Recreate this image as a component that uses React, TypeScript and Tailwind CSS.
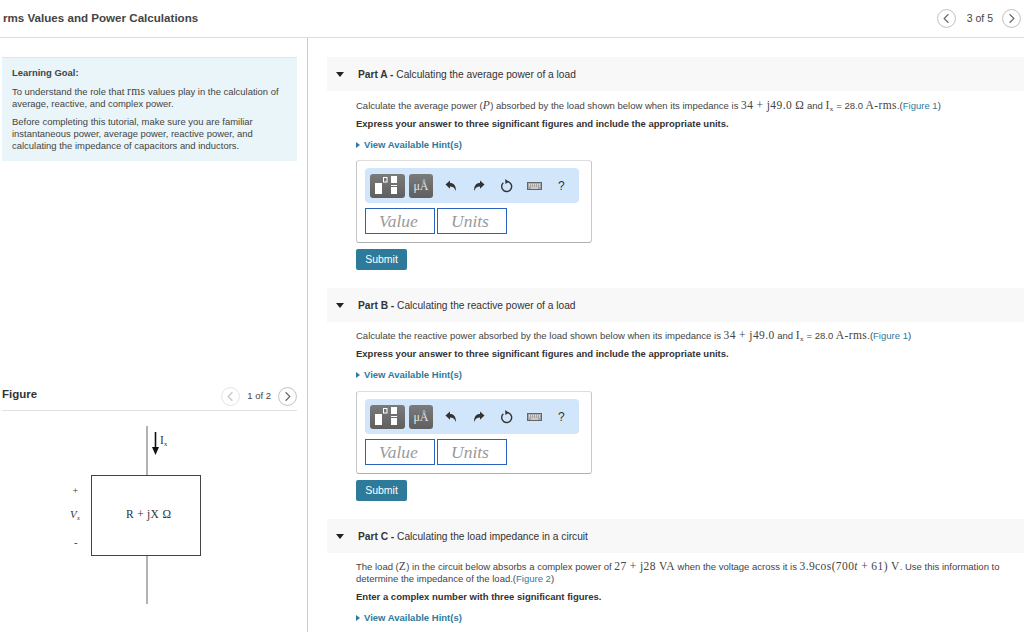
import React from "react";

const M = ({ children, className = "" }: { children: React.ReactNode; className?: string }) => (
  <span className={`font-['Liberation_Serif',serif] text-[11.5px] tracking-[0.4px] ${className}`}>{children}</span>
);
const Link = ({ children }: { children: React.ReactNode }) => <span className="text-[#2f7a9c]">{children}</span>;

const Circle = ({ dir, muted = false, size = 19 }: { dir: "l" | "r"; muted?: boolean; size?: number }) => (
  <svg width={size} height={size} viewBox="0 0 20 20" className="shrink-0">
    <circle cx="10" cy="10" r="9.4" fill="#fff" stroke={muted ? "#dedede" : "#b5b5b5"} strokeWidth="0.9" />
    <path d={dir === "l" ? "M12 5.5 7.5 10l4.5 4.5" : "M8 5.5 12.5 10 8 14.5"} fill="none" stroke={muted ? "#c4c4c4" : "#666"} strokeWidth="1.2" />
  </svg>
);

const Template = () => (
  <svg width="35" height="24" viewBox="0 0 35 24">
    <rect x="5" y="9" width="7" height="11" fill="#fff" />
    <rect x="13.500" y="3.500" width="3.500" height="4.500" fill="none" stroke="#fff" strokeWidth="1" />
    <rect x="21" y="2" width="6" height="7" fill="#fff" />
    <rect x="21" y="11" width="6" height="1" fill="#fff" />
    <rect x="21" y="13" width="6" height="7" fill="#fff" />
  </svg>
);

const Toolbar = () => (
  <div className="flex h-[35px] w-[214px] items-center rounded-[4px] bg-[#d2e6fb] pl-[5px]">
    <div className="h-[24px] w-[35px] rounded-[3px] bg-gradient-to-b from-[#7b7b7b] to-[#5f5f5f]">
      <Template />
    </div>
    <div className="ml-[4px] flex h-[24px] w-[24px] items-center justify-center rounded-[3px] bg-gradient-to-b from-[#7b7b7b] to-[#5f5f5f] font-['Liberation_Serif',serif] text-[12px] text-[#e6e6e6]">
      μÅ
    </div>
    <svg width="12" height="12" viewBox="0 0 12 12" className="ml-[12px]">
      <path d="M0.5 4.5 5 0.5V3c3.800 0 6 2.400 6 8C9.600 7.800 8 6.400 5 6.400V8.700Z" fill="#333" />
    </svg>
    <svg width="12" height="12" viewBox="0 0 12 12" className="ml-[16px]">
      <path d="M11.500 4.500 7 0.500V3C3.200 3 1 5.400 1 11 2.400 7.800 4 6.400 7 6.400V8.700Z" fill="#333" />
    </svg>
    <svg width="13" height="14" viewBox="0 0 13 14" className="ml-[15px]">
      <path d="M7.500 2.600A5 5 0 1 1 3.300 3.800" fill="none" stroke="#333" strokeWidth="1.400" />
      <path d="M5.200 0 9 2.700 5.400 5Z" fill="#333" />
    </svg>
    <svg width="15" height="8" viewBox="0 0 15 8" className="ml-[14px]">
      <rect x="0.500" y="0.500" width="14" height="7" fill="#a5a5a5" stroke="#666" />
      <path d="M2 2.300h11M2 4h11" stroke="#eeeeee" strokeDasharray="1 1" />
      <path d="M4 6h7" stroke="#eeeeee" />
    </svg>
    <span className="ml-[16px] font-['Liberation_Sans',sans-serif] text-[12px] text-[#333]">?</span>
  </div>
);

const Answer = () => (
  <div>
    <div className="flex h-[83px] w-[236px] flex-col gap-[5px] rounded-[3px] border border-t-[#dddddd] border-x-[#c8c8c8] border-b-[#b0b0b0] pl-[8px] pt-[7px]">
      <Toolbar />
      <div className="flex gap-[2px]">
        {["Value", "Units"].map((t) => (
          <div
            key={t}
            className="flex h-[26px] w-[70px] items-center border border-[#2a62bd] pl-[13px] font-['Liberation_Serif',serif] text-[17.5px] italic text-[#9a9a9a]"
          >
            {t}
          </div>
        ))}
      </div>
    </div>
    <div className="mt-[6px] flex h-[21px] w-[51px] items-center justify-center rounded-[2px] bg-[#2e7a9a] text-[10.5px] text-white">
      Submit
    </div>
  </div>
);

const Part = ({ title, sub, children }: { title: string; sub: string; children: React.ReactNode }) => (
  <section>
    <div className="flex h-[34px] items-center bg-[#f8f8f8] pl-[9px]">
      <svg width="8" height="5" viewBox="0 0 8 5" className="shrink-0">
        <path d="M0 0h8L4 5Z" fill="#222" />
      </svg>
      <span className="ml-[14px] pt-[2px] text-[10.2px] text-[#333]">
        <b>{title} - </b>
        {sub}
      </span>
    </div>
    <div className="pl-[29px]">{children}</div>
  </section>
);

const Hint = () => (
  <div className="mt-[7px] flex h-[14px] items-center text-[9.5px] font-bold text-[#2f7a9c]">
    <svg width="4" height="6" viewBox="0 0 4 6" className="mr-[4px]">
      <path d="M0 0l4 3-4 3Z" fill="#2f7a9c" />
    </svg>
    View Available Hint(s)
  </div>
);

const Express = ({ children, className = "mt-[4px]" }: { children: React.ReactNode; className?: string }) => (
  <p className={`${className} text-[9.5px] font-bold leading-[14px] text-[#333]`}>{children}</p>
);

const Diagram = () => (
  <svg width="307" height="200" viewBox="0 0 307 200" className="block">
    <path d="M147 15V64M147 144V193" stroke="#666" strokeWidth="1" />
    <rect x="91.500" y="64.500" width="109" height="80" fill="#fff" stroke="#444" />
    <path d="M155.500 21V37" stroke="#111" strokeWidth="1.600" />
    <path d="M152 36h7l-3.500 8Z" fill="#111" />
    <g fontFamily="'Liberation Serif', serif" fill="#333">
      <text x="160" y="33" fontSize="11.500">I</text>
      <text x="164" y="35" fontSize="6.500">x</text>
      <text x="126" y="107" fontSize="11.500" letterSpacing="0.300">R + jX Ω</text>
      <text x="72.500" y="83" fontSize="10">+</text>
      <text x="70" y="107" fontSize="11" fontStyle="italic">V</text>
      <text x="77" y="109" fontSize="6.500" fontStyle="italic">x</text>
      <text x="74" y="135" fontSize="11">-</text>
    </g>
  </svg>
);

export default function App() {
  return (
    <div className="h-[632px] w-[1024px] overflow-hidden bg-white font-['Liberation_Sans',sans-serif] text-[#333]">
      <header className="flex h-[38px] items-center justify-between border-b border-[#dcdcdc] pl-[3px] pr-[3px]">
        <h1 className="mb-[2px] text-[11.6px] font-bold text-[#444]">rms Values and Power Calculations</h1>
        <div className="flex items-center">
          <Circle dir="l" />
          <span className="ml-[11px] mr-[9px] text-[10.5px] text-[#444]">3 of 5</span>
          <Circle dir="r" />
        </div>
      </header>
      <div className="flex h-[594px]">
        <aside className="h-full w-[308px] shrink-0 border-r border-[#c5ccd6] pt-[19px]">
          <div className="ml-[2px] h-[104px] w-[295px] border-t border-[#e0e6e8] bg-[#e9f5f8] pl-[10px] pt-[9px] text-[9.45px] leading-[12px] text-[#444]">
            <p className="font-bold">Learning Goal:</p>
            <p className="mt-[6px]">
              To understand the role that <M className="text-[10px]">rms</M> values play in the calculation of
              <br />
              average, reactive, and complex power.
            </p>
            <p className="mt-[6px]">
              Before completing this tutorial, make sure you are familiar
              <br />
              instantaneous power, average power, reactive power, and
              <br />
              calculating the impedance of capacitors and inductors.
            </p>
          </div>
          <div className="ml-[2px] mt-[225px] flex h-[25px] w-[295px] items-center justify-between border-b border-[#e2e2e2] pb-[6px]">
            <span className="text-[11.5px] font-bold text-[#333]">Figure</span>
            <div className="mt-[3px] flex items-center">
              <Circle dir="l" muted />
              <span className="ml-[7px] mr-[7px] text-[9.5px] text-[#444]">1 of 2</span>
              <Circle dir="r" />
            </div>
          </div>
          <Diagram />
        </aside>
        <main className="min-w-0 flex-1 pl-[19px] pt-[19px] text-[9.5px] text-[#444]">
          <Part title="Part A" sub="Calculating the average power of a load">
            <p className="mt-[7px] leading-[14px]">
              Calculate the average power (<M className="italic">P</M>) absorbed by the load shown below when its impedance is <M>34 + j49.0 Ω</M> and <M>I<sub className="text-[7px]">x</sub></M> = 28.0 <M>A-rms</M>.(<Link>Figure 1</Link>)
            </p>
            <Express>Express your answer to three significant figures and include the appropriate units.</Express>
            <Hint />
            <div className="mt-[8px]"><Answer /></div>
          </Part>
          <div className="mt-[18px]">
            <Part title="Part B" sub="Calculating the reactive power of a load">
              <p className="mt-[6px] leading-[14px]">
                Calculate the reactive power absorbed by the load shown below when its impedance is <M>34 + j49.0</M> and <M>I<sub className="text-[7px]">x</sub></M> = 28.0 <M>A-rms</M>.(<Link>Figure 1</Link>)
              </p>
              <Express>Express your answer to three significant figures and include the appropriate units.</Express>
              <Hint />
              <div className="mt-[9px]"><Answer /></div>
            </Part>
          </div>
          <div className="mt-[18px]">
            <Part title="Part C" sub="Calculating the load impedance in a circuit">
              <p className="mt-[7px] leading-[12px]">
                The load (<M>Z</M>) in the circuit below absorbs a complex power of <M>27 + j28 VA</M> when the voltage across it is <M>3.9cos(700<i>t</i> + 61) V</M>. Use this information to
                <br />
                determine the impedance of the load.(<Link>Figure 2</Link>)
              </p>
              <Express className="mt-[5px]">Enter a complex number with three significant figures.</Express>
              <Hint />
            </Part>
          </div>
        </main>
      </div>
    </div>
  );
}
